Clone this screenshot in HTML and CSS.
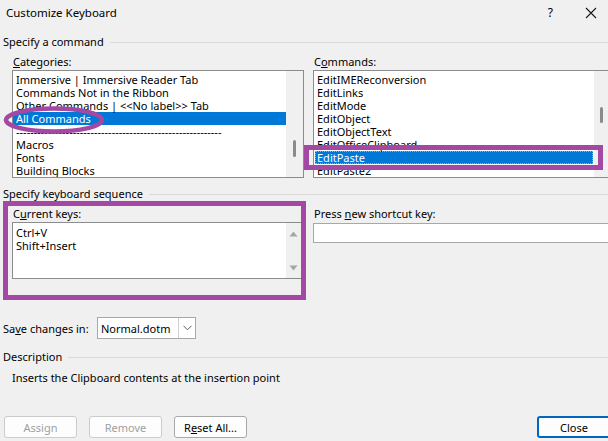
FILE: index.html
```html
<!DOCTYPE html>
<html>
<head>
<meta charset="utf-8">
<link rel="stylesheet" href="styles.css">
</head>
<body>
<div class="dialog">
  <div class="titlebar">
    <span class="title">Customize Keyboard</span>
    <span class="tb-icons">
      <span class="help">?</span>
      <svg class="xicon" width="12" height="12" viewBox="0 0 12 12"><path d="M1 1 L11 11 M11 1 L1 11" stroke="#1a1a1a" stroke-width="1.1" fill="none"/></svg>
    </span>
  </div>

  <div class="group-head gh-cmd"><span>Specify a command</span><i class="rule"></i></div>

  <div class="cols cols-cmd">
    <div class="col col-cat">
      <div class="label"><u>C</u>ategories:</div>
      <div class="listbox">
        <ul class="items">
          <li>Immersive | Immersive Reader Tab</li>
          <li>Commands Not in the Ribbon</li>
          <li>Other Commands | &lt;&lt;No label&gt;&gt; Tab</li>
          <li class="sel">All Commands</li>
          <li>----------------------------------------------------------</li>
          <li>Macros</li>
          <li>Fonts</li>
          <li>Building Blocks</li>
        </ul>
        <div class="vscroll"><div class="thumb thumb-cat"></div></div>
      </div>
    </div>
    <div class="col col-cmds">
      <div class="label">C<u>o</u>mmands:</div>
      <div class="listbox">
        <ul class="items">
          <li>EditIMEReconversion</li>
          <li>EditLinks</li>
          <li>EditMode</li>
          <li>EditObject</li>
          <li>EditObjectText</li>
          <li>EditOfficeClipboard</li>
          <li class="sel focus">EditPaste</li>
          <li>EditPaste2</li>
        </ul>
        <div class="vscroll"><div class="thumb thumb-cmds"></div></div>
      </div>
    </div>
  </div>

  <div class="group-head gh-keys"><span>Specify keyboard sequence</span><i class="rule"></i></div>

  <div class="cols cols-keys">
    <div class="col col-cur">
      <div class="label">C<u>u</u>rrent keys:</div>
      <div class="keysbox">
        <ul class="items">
          <li>Ctrl+V</li>
          <li>Shift+Insert</li>
        </ul>
        <div class="arrows">
          <svg width="9" height="6" viewBox="0 0 9 6"><path d="M0.5 5.5 L4.5 0.5 L8.5 5.5 Z" fill="#a6a6a6"/></svg>
          <svg width="9" height="6" viewBox="0 0 9 6"><path d="M0.5 0.5 L4.5 5.5 L8.5 0.5 Z" fill="#a6a6a6"/></svg>
        </div>
      </div>
    </div>
    <div class="col col-new">
      <div class="label">Press <u>n</u>ew shortcut key:</div>
      <div class="inputbox"></div>
    </div>
  </div>

  <div class="save-row">
    <span class="save-label">Sa<u>v</u>e changes in:</span>
    <div class="select">
      <span class="select-text">Normal.dotm</span>
      <span class="select-btn">
        <svg width="9" height="6" viewBox="0 0 9 6"><path d="M0.5 0.8 L4.5 4.8 L8.5 0.8" stroke="#606060" stroke-width="1" fill="none"/></svg>
      </span>
    </div>
  </div>

  <div class="group-head gh-desc"><span>Description</span><i class="rule"></i></div>
  <div class="desc-text">Inserts the Clipboard contents at the insertion point</div>

  <div class="buttons">
    <div class="btn disabled">Assign</div>
    <div class="btn disabled">Remove</div>
    <div class="btn">R<u>e</u>set All...</div>
    <div class="spacer"></div>
    <div class="btn primary">Close</div>
  </div>

  <svg class="annot annot-ellipse" width="106" height="30" viewBox="0 0 106 30"><ellipse cx="52" cy="14" rx="48" ry="11.5" stroke="#a349a4" stroke-width="4.5" fill="none"/></svg>
  <div class="annot annot-rect1"></div>
  <div class="annot annot-rect2"></div>
</div>
</body>
</html>
```

FILE: styles.css
```css
html, body {
  margin: 0;
  padding: 0;
  background: #f0f0f0;
  overflow: hidden;
}
body {
  width: 608px;
  height: 441px;
  font-family: "Noto Sans", "DejaVu Sans", sans-serif;
  font-size: 11px;
  color: #000;
}
.dialog {
  position: relative;
  width: 608px;
  height: 441px;
  overflow: hidden;
}
u { text-decoration: underline; text-underline-offset: 1px; }

.titlebar {
  height: 26px;
  line-height: 26px;
  display: flex;
  align-items: center;
  padding-left: 6px;
  font-size: 11.5px;
}
.title { flex: 1; }
.tb-icons {
  display: flex;
  align-items: center;
  gap: 32px;
  padding-right: 11px;
}
.help { font-size: 12px; }
.xicon { display: block; }

.group-head {
  height: 16px;
  line-height: 16px;
  display: flex;
  align-items: center;
  padding-left: 3px;
}
.group-head .rule {
  flex: 1;
  height: 1px;
  background: #d9d9d9;
  margin-left: 6px;
}
.gh-cmd { margin-top: 8px; }
.gh-keys { margin-top: 8px; }
.gh-desc { margin-top: 10px; }

.cols { display: flex; padding-left: 12px; }
.cols-cmd { gap: 9px; margin-top: 4px; }
.cols-keys { gap: 11px; margin-top: 4px; }
.col { display: flex; flex-direction: column; flex-shrink: 0; }
.col-cat { width: 292px; }
.col-cmds { width: 299px; }
.col-cur { width: 290px; }
.col-new { width: 310px; }

.label {
  height: 16px;
  line-height: 16px;
  padding-left: 1px;
}

.listbox {
  height: 108px;
  box-sizing: border-box;
  border: 1px solid #8c8c8c;
  background: #fff;
  display: flex;
  overflow: hidden;
}
.items {
  list-style: none;
  margin: 0;
  padding: 2px 0 0 0;
  flex: 1;
  min-width: 0;
  white-space: nowrap;
  overflow: hidden;
}
.items li {
  height: 13px;
  line-height: 13px;
  padding-left: 3px;
}
.items li.sel {
  background: #0078d7;
  color: #fff;
}
.items li.focus {
  box-sizing: border-box;
  outline: 1px dotted #f0a030;
  outline-offset: -1px;
  margin: 0 1px;
  padding-left: 2px;
}
.vscroll {
  width: 17px;
  flex-shrink: 0;
  background: #f0f0f0;
  display: flex;
  flex-direction: column;
}
.thumb {
  width: 3px;
  border-radius: 2px;
  background: #8a8a8a;
}
.thumb-cat { margin-top: 69px; margin-left: 7px; height: 17px; }
.thumb-cmds { margin-top: 36px; margin-left: 6px; height: 16px; }

.keysbox {
  height: 57px;
  box-sizing: border-box;
  border: 1px solid #8c8c8c;
  background: #fff;
  display: flex;
}
.keysbox .items { padding-top: 3px; }
.arrows {
  width: 15px;
  background: #f0f0f0;
  display: flex;
  flex-direction: column;
  justify-content: space-between;
  align-items: center;
  padding: 8px 0 7px;
}
.arrows svg { display: block; }

.inputbox {
  height: 20px;
  box-sizing: border-box;
  margin-top: 1px;
  border: 1px solid #a8a8a8;
  background: #fff;
}

.save-row {
  display: flex;
  align-items: center;
  margin-top: 38px;
  padding-left: 3px;
  height: 22px;
}
.save-label { width: 94px; }
.select {
  width: 99px;
  height: 22px;
  box-sizing: border-box;
  border: 1px solid #a8a8a8;
  background: #fff;
  display: flex;
  align-items: center;
}
.select-text { flex: 1; padding-left: 3px; }
.select-btn {
  width: 16px;
  height: 20px;
  border-left: 1px solid #d0d0d0;
  display: flex;
  align-items: center;
  justify-content: center;
}
.select-btn svg { display: block; }

.desc-text {
  margin-top: 5px;
  padding-left: 12px;
  height: 16px;
  line-height: 16px;
}

.buttons {
  display: flex;
  gap: 12px;
  margin-top: 30px;
  padding-left: 4px;
  margin-right: -3px;
}
.btn {
  width: 73px;
  height: 22px;
  box-sizing: border-box;
  border: 1px solid #a8a8a8;
  border-radius: 3px;
  background: #fdfdfd;
  display: flex;
  align-items: center;
  justify-content: center;
  flex-shrink: 0;
}
.btn.disabled {
  border-color: #cccccc;
  color: #a0a0a0;
}
.btn.primary {
  width: 74px;
  border: 2px solid #0067c0;
}
.spacer { flex: 1; }

.annot { position: absolute; }
.annot-ellipse { left: 2px; top: 106px; }
.annot-rect1 {
  left: 304px; top: 145px;
  width: 299px; height: 25px;
  box-sizing: border-box;
  border: 5px solid #a349a4;
}
.annot-rect2 {
  left: 3px; top: 201px;
  width: 303px; height: 99px;
  box-sizing: border-box;
  border: 5px solid #a349a4;
}
```
